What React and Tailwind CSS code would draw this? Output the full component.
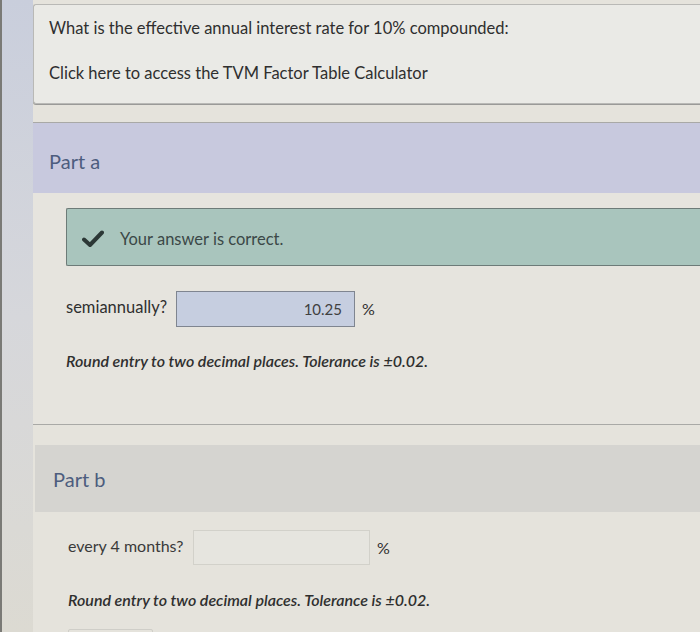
import React from 'react'

function Check(){
  return (
    <svg width="22" height="18" viewBox="0 0 22 18" className="shrink-0">
      <path d="M2 9.5 L8 15 L20 2.5" fill="none" stroke="#2c3836" strokeWidth="4" strokeLinecap="round" strokeLinejoin="round" />
    </svg>
  )
}

export default function App(){
  return (
    <div className="flex w-[700px] h-[632px] overflow-hidden bg-[#e5e3dc] text-[#2f2f2f] font-['Lato','Liberation_Sans',sans-serif]">
      <div className="w-[33px] shrink-0 border-l-2 border-[#7a7a76] bg-gradient-to-b from-[#c9cedc] via-[#d6d7db] to-[#dcdad2]" />

      <div className="flex-1 pt-[4px]">
        {/* question card */}
        <div className="h-[100px] rounded-l-[3px] border border-r-0 border-[#b9b9b6] bg-[#eaeae6] pl-[15px] pt-[11px] text-[16.5px] shadow-[0_1px_0_#9a9a98]">
          <p className="leading-[24px]">What is the effective annual interest rate for 10% compounded:</p>
          <p className="mt-[21px] leading-[24px]">Click here to access the TVM Factor Table Calculator</p>
        </div>

        {/* part a */}
        <div className="mt-[18px] h-[303px] border-t border-b border-[#a9a9a6] bg-[#e6e4de]">
          <div className="h-[70px] bg-[#c8c9de] pl-[16px] pt-[5px] flex items-center text-[20px] text-[#4d5d7e]">Part a</div>
          <div className="pl-[33px] pt-[15px]">
            <div className="h-[58px] flex items-center border border-r-0 border-[#6d7b78] rounded-l-[2px] bg-[#a9c5bd] pl-[15px] pt-[4px]">
              <Check />
              <span className="ml-[16px] text-[16.5px] text-[#3b4847]">Your answer is correct.</span>
            </div>
            <div className="mt-[25px] flex items-center">
              <span className="text-[16.5px] w-[110px] -mt-[3px]">semiannually?</span>
              <div className="w-[179px] h-[36px] border border-[#7f8590] bg-[#c6cee0] flex items-center justify-end pr-[12px] text-[15px] text-[#404040]">10.25</div>
              <span className="ml-[7px] text-[16px]">%</span>
            </div>
            <p className="mt-[22px] italic font-semibold text-[16px] text-[#2f2f2f]">Round entry to two decimal places. Tolerance is ±0.02.</p>
          </div>
        </div>

        {/* part b */}
        <div className="mt-[20px] ml-[2px] bg-[#e5e3dc]">
          <div className="h-[67px] bg-[#d5d4d0] pl-[18px] flex items-center text-[20px] text-[#4d5d7e]">Part b</div>
          <div className="pl-[33px] pt-[18px]">
            <div className="flex items-center">
              <span className="text-[16px] w-[125px] text-[#3a3a3a] -mt-[3px]">every 4 months?</span>
              <div className="w-[177px] h-[35px] border border-[#d2d1ca] bg-[#e6e5df]" />
              <span className="ml-[7px] text-[16px]">%</span>
            </div>
            <p className="mt-[23px] italic font-semibold text-[16px] text-[#2f2f2f]">Round entry to two decimal places. Tolerance is ±0.02.</p>
            <div className="mt-[17px] w-[85px] h-[20px] border border-[#cfcec8] rounded-[2px]" />
          </div>
        </div>
      </div>
    </div>
  )
}
